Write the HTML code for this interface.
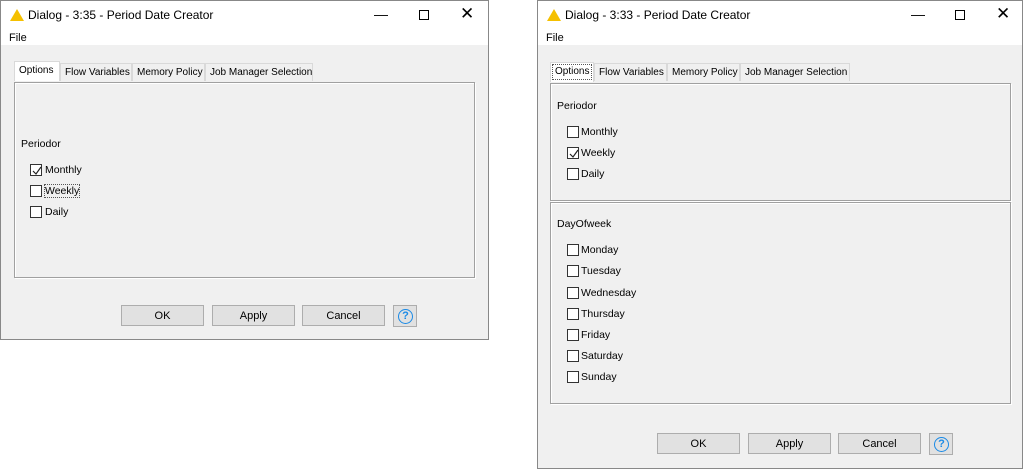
<!DOCTYPE html><html><head><style>
*{margin:0;padding:0;box-sizing:border-box}
body{width:1024px;height:469px;background:#fff;position:relative;overflow:hidden;font-family:"Liberation Sans",sans-serif;font-size:11px;color:#000}
.a{position:absolute}
.dlg{position:absolute;background:#f0f0f0;border:1px solid #888}
.tb{position:absolute;left:0;right:0;top:0;height:44px;background:#fff}
.title{position:absolute;left:27px;top:7px;font-size:12px}
.file{position:absolute;left:8px;top:31px;font-size:11px}
.tri{position:absolute;left:9px;top:8px;width:0;height:0;border-left:7px solid transparent;border-right:7px solid transparent;border-bottom:12px solid #f5c000}
.tab{position:absolute;height:18px;border:1px solid #d9d9d9;border-bottom:none;background:#f0f0f0;padding:3px 0 0 4px;font-size:10px;white-space:nowrap;overflow:hidden}
.tab.sel{background:#fff;height:20px}
.grp{position:absolute;border:1px solid #a0a0a0;box-shadow:inset 1px 1px 0 #fff,1px 1px 0 #fff}
.cb{position:absolute;width:12px;height:12px;border:1px solid #333;background:#fff}
.cb svg{position:absolute;left:1px;top:1px}
.lbl{position:absolute;font-size:10.5px}
.btn{position:absolute;width:83px;height:21px;border:1px solid #adadad;background:#e1e1e1;text-align:center;line-height:20px;font-size:11px}
.help{position:absolute;width:24px;height:22px;border:1px solid #adadad;background:#e1e1e1}
.help span{position:absolute;left:4px;top:3px;width:15px;height:15px;border:1.5px solid #1a8ae6;border-radius:50%;color:#1a8ae6;font-size:11px;font-weight:bold;text-align:center;line-height:12px}
.ctl{position:absolute;top:5px;font-size:14px}
</style></head><body>
<div class="dlg" style="left:0;top:0;width:489px;height:340px">
<div class="tb"></div><div class="tri"></div>
<div class="title">Dialog - 3:35 - Period Date Creator</div>
<div class="ctl" style="left:373px">&#8212;</div>
<div class="a" style="left:418px;top:9px;width:10px;height:10px;border:1px solid #000"></div>
<div class="ctl" style="left:459px;top:3px;font-size:17px">&#10005;</div>
<div class="file">File</div>
<div class="tab sel" style="left:13px;top:60px;width:46px">Options</div>
<div class="tab" style="left:59px;top:62px;width:72px">Flow Variables</div>
<div class="tab" style="left:131px;top:62px;width:73px">Memory Policy</div>
<div class="tab" style="left:204px;top:62px;width:108px">Job Manager Selection</div>
<div class="grp" style="left:13px;top:81px;width:461px;height:196px"></div>
<div class="lbl" style="left:20px;top:137px">Periodor</div>
<div class="cb" style="left:29px;top:163px"><svg width="10" height="10"><path d="M1 5 L4 8 L9 1" stroke="#222" fill="none" stroke-width="1.2"/></svg></div>
<div class="lbl" style="left:44px;top:163px">Monthly</div>
<div class="cb" style="left:29px;top:184px"></div>
<div class="lbl" style="left:44px;top:184px;outline:1px dotted #555">Weekly</div>
<div class="cb" style="left:29px;top:205px"></div>
<div class="lbl" style="left:44px;top:205px">Daily</div>
<div class="btn" style="left:120px;top:304px">OK</div>
<div class="btn" style="left:211px;top:304px">Apply</div>
<div class="btn" style="left:301px;top:304px">Cancel</div>
<div class="help" style="left:392px;top:304px"><span>?</span></div>
</div>
<div class="dlg" style="left:537px;top:0;width:486px;height:469px">
<div class="tb"></div><div class="tri"></div>
<div class="title">Dialog - 3:33 - Period Date Creator</div>
<div class="ctl" style="left:373px">&#8212;</div>
<div class="a" style="left:417px;top:9px;width:10px;height:10px;border:1px solid #000"></div>
<div class="ctl" style="left:458px;top:3px;font-size:17px">&#10005;</div>
<div class="file">File</div>
<div class="tab sel" style="left:12px;top:61px;width:44px;outline:1px dotted #555;outline-offset:-3px">Options</div>
<div class="tab" style="left:56px;top:62px;width:73px">Flow Variables</div>
<div class="tab" style="left:129px;top:62px;width:73px">Memory Policy</div>
<div class="tab" style="left:202px;top:62px;width:110px">Job Manager Selection</div>
<div class="grp" style="left:12px;top:82px;width:461px;height:118px"></div>
<div class="grp" style="left:12px;top:201px;width:461px;height:202px"></div>
<div class="lbl" style="left:19px;top:99px">Periodor</div>
<div class="cb" style="left:29px;top:125px"></div><div class="lbl" style="left:43px;top:125px">Monthly</div>
<div class="cb" style="left:29px;top:146px"><svg width="10" height="10"><path d="M1 5 L4 8 L9 1" stroke="#222" fill="none" stroke-width="1.2"/></svg></div><div class="lbl" style="left:43px;top:146px">Weekly</div>
<div class="cb" style="left:29px;top:167px"></div><div class="lbl" style="left:43px;top:167px">Daily</div>
<div class="lbl" style="left:19px;top:217px">DayOfweek</div>
<div class="cb" style="left:29px;top:243px"></div><div class="lbl" style="left:43px;top:243px">Monday</div>
<div class="cb" style="left:29px;top:264px"></div><div class="lbl" style="left:43px;top:264px">Tuesday</div>
<div class="cb" style="left:29px;top:286px"></div><div class="lbl" style="left:43px;top:286px">Wednesday</div>
<div class="cb" style="left:29px;top:307px"></div><div class="lbl" style="left:43px;top:307px">Thursday</div>
<div class="cb" style="left:29px;top:328px"></div><div class="lbl" style="left:43px;top:328px">Friday</div>
<div class="cb" style="left:29px;top:349px"></div><div class="lbl" style="left:43px;top:349px">Saturday</div>
<div class="cb" style="left:29px;top:370px"></div><div class="lbl" style="left:43px;top:370px">Sunday</div>
<div class="btn" style="left:119px;top:432px">OK</div>
<div class="btn" style="left:210px;top:432px">Apply</div>
<div class="btn" style="left:300px;top:432px">Cancel</div>
<div class="help" style="left:391px;top:432px"><span>?</span></div>
</div>
</body></html>
